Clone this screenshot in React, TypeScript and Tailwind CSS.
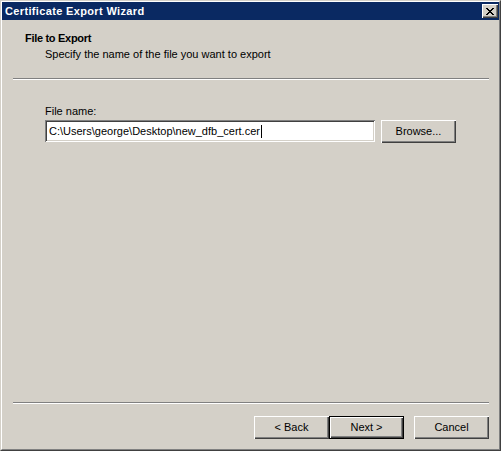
import React from "react";

const font = { fontFamily: '"Liberation Sans", Arial, sans-serif' };

function Btn({ label, def = false }: { label: string; def?: boolean }) {
  if (def) {
    return (
      <div className="w-[75px] h-[23px] border border-black bg-[#d4d0c8] flex">
        <div className="flex-1 flex items-center justify-center text-[11px] leading-[13px] text-black shadow-[inset_1px_1px_#ffffff,inset_-1px_-1px_#404040,inset_-2px_-2px_#808080]">
          {label}
        </div>
      </div>
    );
  }
  return (
    <div className="w-[75px] h-[23px] bg-[#d4d0c8] flex items-center justify-center text-[11px] leading-[13px] text-black shadow-[inset_1px_1px_#ffffff,inset_-1px_-1px_#404040,inset_-2px_-2px_#808080]">
      {label}
    </div>
  );
}

export default function App() {
  return (
    <div style={font} className="w-[501px] h-[451px] bg-[#d4d0c8] border border-t-[#d4d0c8] border-l-[#d4d0c8] border-r-[#404040] border-b-[#404040] flex">
      <div className="flex-1 flex flex-col border border-t-white border-l-white border-r-[#808080] border-b-[#808080]">
        {/* Title bar */}
        <div className="h-[18px] bg-[#0a2962] flex items-center justify-between pl-[3px] pr-[1px]">
          <span className="text-white font-bold text-[11px] leading-[13px] tracking-[0.35px]">Certificate Export Wizard</span>
          <div className="w-[16px] h-[14px] bg-[#d4d0c8] flex items-center justify-center shadow-[inset_1px_1px_#ffffff,inset_-1px_-1px_#404040,inset_-2px_-2px_#808080]">
            <svg width="8" height="7" viewBox="0 0 8 7" shapeRendering="crispEdges">
              <path fill="#000" d="M0 0h2v1h-2z M6 0h2v1h-2z M1 1h2v1h-2z M5 1h2v1h-2z M2 2h4v1h-4z M3 3h2v1h-2z M2 4h4v1h-4z M1 5h2v1h-2z M5 5h2v1h-2z M0 6h2v1h-2z M6 6h2v1h-2z" />
            </svg>
          </div>
        </div>
        {/* Content */}
        <div className="flex-1 flex flex-col">
          <div className="mt-[12px] pl-[23px] text-[11px] leading-[13px] font-bold text-black tracking-[-0.3px]">File to Export</div>
          <div className="mt-[3px] pl-[43px] text-[11px] leading-[13px] text-black">Specify the name of the file you want to export</div>
          <div className="mt-[17px] ml-[11px] mr-[10px]">
            <div className="h-px bg-[#808080]" />
            <div className="h-px bg-white" />
          </div>
          <div className="mt-[25px] pl-[43px] text-[11px] leading-[13px] text-black">File name:</div>
          <div className="mt-[2px] pl-[43px] flex items-start">
            <div className="w-[330px] h-[22px] bg-white flex items-center pl-[4px] text-[11px] leading-[13px] text-black shadow-[inset_1px_1px_#808080,inset_-1px_-1px_#ffffff,inset_2px_2px_#404040,inset_-2px_-2px_#d4d0c8]">
              <span>C:\Users\george\Desktop\new_dfb_cert.cer</span>
              <span className="inline-block w-px h-[13px] bg-black ml-[1px]" />
            </div>
            <div className="ml-[6px]">
              <Btn label="Browse..." />
            </div>
          </div>
          <div className="flex-1" />
          <div className="ml-[11px] mr-[10px]">
            <div className="h-px bg-[#808080]" />
            <div className="h-px bg-white" />
          </div>
          <div className="mt-[12px] pb-[10px] pr-[10px] flex justify-end">
            <Btn label="< Back" />
            <Btn label="Next >" def />
            <div className="ml-[10px]">
              <Btn label="Cancel" />
            </div>
          </div>
        </div>
      </div>
    </div>
  );
}
